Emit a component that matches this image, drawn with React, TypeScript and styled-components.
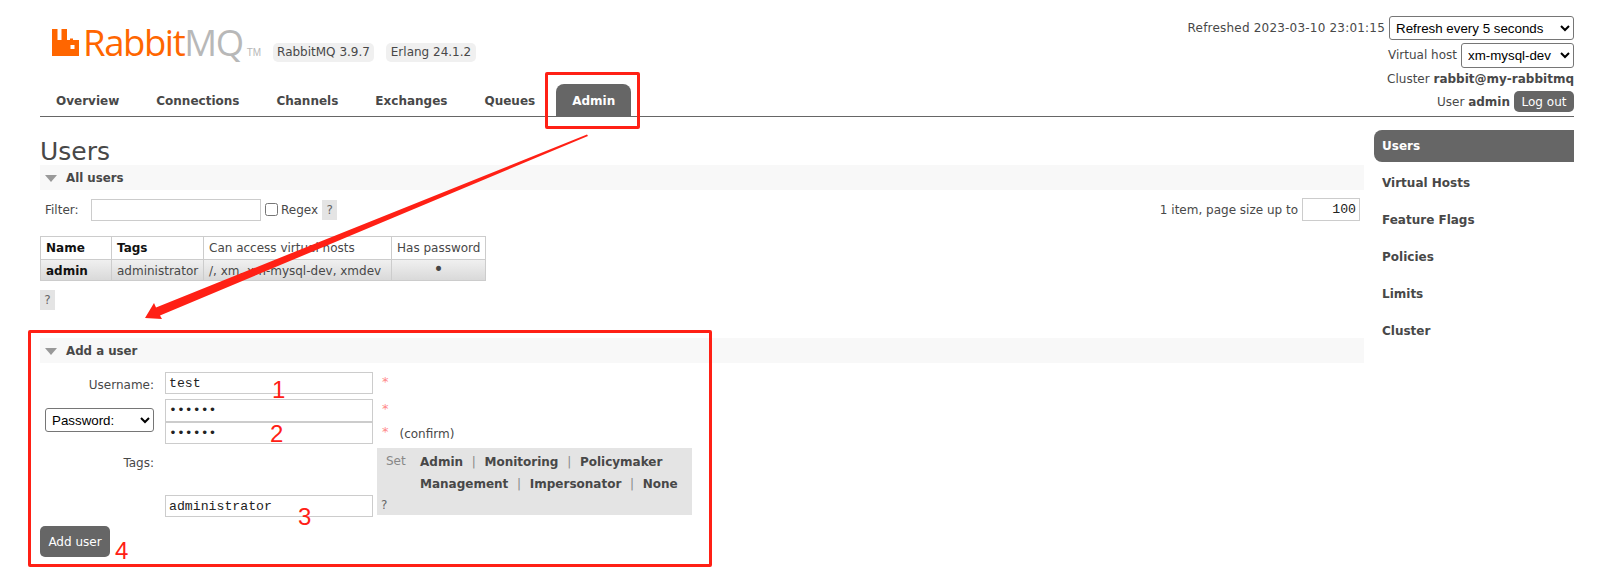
import React from "react";
import styled, { createGlobalStyle } from "styled-components";

const Global = createGlobalStyle`
  html, body { margin: 0; padding: 0; background: #fff; }
  body { font-family: "DejaVu Sans", Verdana, sans-serif; font-size: 12px; color: #484848; }
`;

const Page = styled.div`
  position: relative;
  width: 1614px;
  height: 572px;
  padding: 0 40px;
  box-sizing: border-box;
  overflow: hidden;
`;

const Header = styled.header`
  display: flex;
  justify-content: space-between;
  height: 116px;
  border-bottom: 1px solid #666;
  box-sizing: content-box;
`;

const Brand = styled.div`
  display: flex;
  flex-direction: column;
`;

const LogoRow = styled.div`
  display: flex;
  align-items: flex-start;
  height: 84px;
  padding: 29px 0 0 12px;
  box-sizing: border-box;
`;

const LogoWord = styled.div`
  display: flex;
  align-items: baseline;
  height: 27px;
  line-height: 27px;
  margin-left: 4px;
  font-family: "Open Sans", sans-serif;
  font-weight: 400;
  font-size: 36.5px;
  letter-spacing: -1.4px;
  width: 178px;
  white-space: nowrap;
`;

const Rabbit = styled.span`
  color: #ff6600;
`;

const MQ = styled.span`
  color: #b8b8b8;
`;

const TM = styled.span`
  color: #b8b8b8;
  font-family: "Liberation Sans", sans-serif;
  font-size: 10px;
  letter-spacing: 0;
  margin-left: 4px;
`;

const Badge = styled.span<{ $w: number; $ml: number }>`
  width: ${(p) => p.$w}px;
  margin: 14px 0 0 ${(p) => p.$ml}px;
  height: 19px;
  line-height: 19px;
  text-align: center;
  background: #f0f0f0;
  border-radius: 5px;
  font-size: 12px;
  white-space: nowrap;
`;

const Tabs = styled.nav`
  display: flex;
  height: 32px;
`;

const Tab = styled.a<{ $active?: boolean }>`
  display: block;
  height: 32px;
  line-height: 34px;
  padding: 0 16px;
  font-weight: bold;
  font-size: 12px;
  white-space: nowrap;
  border-radius: 8px 8px 0 0;
  color: ${(p) => (p.$active ? "#fff" : "#484848")};
  background: ${(p) => (p.$active ? "#666" : "transparent")};
  margin-right: ${(p) => (p.$active ? "0" : "5px")};
`;

const Status = styled.div`
  display: flex;
  flex-direction: column;
  align-items: flex-end;
  padding-top: 14px;
`;

const StatusRow = styled.div<{ $h: number }>`
  display: flex;
  align-items: center;
  gap: 4px;
  height: ${(p) => p.$h}px;
  white-space: nowrap;
`;

const Refreshed = styled.span`
  letter-spacing: 0.2px;
`;

const NativeSelect = styled.select<{ $w: number; $h: number }>`
  width: ${(p) => p.$w}px;
  height: ${(p) => p.$h}px;
  font-family: "Liberation Sans", Arial, sans-serif;
  font-size: 13.33px;
  color: #000;
  background: #fff;
  border: 1px solid #767676;
  border-radius: 3px;
  padding: 0 2px;
  margin: 0;
`;

const Logout = styled.button`
  width: 60px;
  height: 21px;
  padding: 0;
  border: 0;
  border-radius: 5px;
  background: #666;
  color: #fff;
  font-family: "DejaVu Sans", sans-serif;
  font-size: 12px;
`;

const Body = styled.div`
  display: flex;
  gap: 10px;
`;

const Content = styled.main`
  width: 1324px;
`;

const Title = styled.h1`
  margin: 0;
  height: 48px;
  padding-top: 20px;
  box-sizing: border-box;
  font-size: 25px;
  line-height: 30px;
  font-weight: normal;
  color: #484848;
`;

const SectionBar = styled.div`
  display: flex;
  align-items: center;
  height: 25px;
  background: #f8f8f8;
  padding-left: 6px;
  font-weight: bold;
  font-size: 11.8px;
`;

const Triangle = styled.span`
  width: 0;
  height: 0;
  border-left: 6px solid transparent;
  border-right: 6px solid transparent;
  border-top: 7px solid #999;
  margin-right: 7px;
  margin-left: -1px;
  margin-top: 1px;
`;

const SectionName = styled.span`
  margin-left: 2px;
`;

const FilterRow = styled.div`
  display: flex;
  align-items: center;
  height: 23px;
  margin-top: 8px;
  padding-left: 5px;
`;

const FilterLabel = styled.span`
  width: 46px;
`;

const TextInput = styled.input<{ $w: number; $h?: number; $right?: boolean }>`
  display: block;
  box-sizing: border-box;
  width: ${(p) => p.$w}px;
  height: ${(p) => p.$h ?? 22}px;
  margin: 0;
  padding: 0 3px;
  border: 1px solid #ccc;
  background: #fff;
  outline: none;
  font-family: "Liberation Mono", "Courier New", monospace;
  font-size: 13.2px;
  color: #222;
  text-align: ${(p) => (p.$right ? "right" : "left")};
`;

const Check = styled.input`
  width: 13px;
  height: 13px;
  margin: 0 3px 0 4px;
`;

const Help = styled.span<{ $mt?: number; $ml?: number }>`
  display: block;
  width: 15px;
  height: 20px;
  line-height: 20px;
  text-align: center;
  background: #e4e4e4;
  color: #666;
  font-size: 12px;
  margin-top: ${(p) => p.$mt ?? 0}px;
  margin-left: ${(p) => p.$ml ?? 0}px;
`;

const Spacer = styled.div`
  flex: 1;
`;

const Paging = styled.span`
  margin-right: 4px;
`;

const PagingEnd = styled.div`
  width: 4px;
`;

const Table = styled.table`
  border-collapse: collapse;
  margin-top: 15px;
  font-size: 12px;
  width: 445px;
  table-layout: fixed;
`;

const Th = styled.th<{ $w: number; $strong?: boolean }>`
  box-sizing: border-box;
  width: ${(p) => p.$w}px;
  height: 23px;
  padding: 0 5px;
  border: 1px solid #ccc;
  text-align: left;
  white-space: nowrap;
  font-weight: ${(p) => (p.$strong ? "bold" : "normal")};
  color: ${(p) => (p.$strong ? "#111" : "#484848")};
`;

const Tr = styled.tr`
  background: linear-gradient(#f0f0f0, #d8d8d8);
`;

const Td = styled.td<{ $strong?: boolean; $center?: boolean }>`
  height: 21px;
  padding: 1px 5px 0;
  box-sizing: border-box;
  border: 1px solid #ccc;
  white-space: nowrap;
  overflow: hidden;
  font-weight: ${(p) => (p.$strong ? "bold" : "normal")};
  color: ${(p) => (p.$strong ? "#111" : "#484848")};
  text-align: ${(p) => (p.$center ? "center" : "left")};
`;

const Dot = styled.span`
  font-size: 17px;
  line-height: 12px;
  color: #444;
`;

const AddSection = styled.div`
  margin-top: 28px;
`;

const FormGrid = styled.div`
  display: grid;
  grid-template-columns: 125px 212px 1fr;
  grid-template-rows: 27px 23px 26px 69px;
  margin-top: 9px;
`;

const FieldLabel = styled.label<{ $row: string; $top: number }>`
  grid-column: 1;
  grid-row: ${(p) => p.$row};
  padding: ${(p) => p.$top}px 11px 0 0;
  text-align: right;
`;

const SelectCell = styled.div`
  grid-column: 1;
  grid-row: 2 / 4;
  padding: 9px 0 0 5px;
`;

const InputCell = styled.div<{ $row: number; $end?: boolean }>`
  grid-column: 2;
  grid-row: ${(p) => p.$row};
  display: flex;
  align-items: ${(p) => (p.$end ? "flex-end" : "flex-start")};
`;

const NoteCell = styled.div<{ $row: number }>`
  grid-column: 3;
  grid-row: ${(p) => p.$row};
  display: flex;
  gap: 11px;
  padding-left: 5px;
  align-items: flex-start;
`;

const Star = styled.span`
  color: #f88;
  font-size: 13px;
  line-height: 19px;
`;

const Confirm = styled.span`
  line-height: 22px;
  padding-top: 1px;
`;

const TagPanel = styled.div`
  grid-column: 3;
  grid-row: 4;
  width: 315px;
  height: 67px;
  box-sizing: border-box;
  background: #e4e4e4;
  padding: 3px 0 0 9px;
  display: grid;
  grid-template-columns: 34px 1fr;
  grid-template-rows: 22px 22px 1fr;
`;

const SetLabel = styled.span`
  color: #888;
  line-height: 16px;
  margin-top: 2px;
`;

const TagLinks = styled.div`
  grid-column: 2;
  display: flex;
  align-items: center;
  font-weight: bold;
  white-space: nowrap;
`;

const Pipe = styled.span`
  font-weight: normal;
  color: #888;
  margin: 0 8.7px;
`;

const PanelHelp = styled.span`
  grid-column: 1;
  grid-row: 3;
  margin-left: -5px;
  padding-top: 3px;
  color: #666;
`;

const AddButton = styled.button`
  display: block;
  width: 70px;
  height: 31px;
  margin-top: 9px;
  padding: 0;
  border: 0;
  border-radius: 5px;
  background: #666;
  color: #fff;
  font-family: "DejaVu Sans", sans-serif;
  font-size: 12px;
`;

const SideNav = styled.nav`
  width: 200px;
  padding-top: 13px;
  display: flex;
  flex-direction: column;
  gap: 5px;
`;

const SideItem = styled.a<{ $active?: boolean }>`
  display: block;
  height: 32px;
  line-height: 32px;
  padding-left: 8px;
  font-weight: bold;
  border-radius: 8px 0 0 8px;
  color: ${(p) => (p.$active ? "#fff" : "#484848")};
  background: ${(p) => (p.$active ? "#666" : "transparent")};
`;

const RedFrame = styled.div<{ $x: number; $y: number; $w: number; $h: number }>`
  position: absolute;
  left: ${(p) => p.$x}px;
  top: ${(p) => p.$y}px;
  width: ${(p) => p.$w}px;
  height: ${(p) => p.$h}px;
  box-sizing: border-box;
  border: 3px solid #ff2015;
  border-radius: 2px;
  pointer-events: none;
`;

const Mark = styled.span<{ $x: number; $y: number }>`
  position: absolute;
  left: ${(p) => p.$x}px;
  top: ${(p) => p.$y}px;
  font-family: "Liberation Sans", sans-serif;
  font-size: 24px;
  line-height: 24px;
  color: #ff2015;
`;

const ArrowSvg = styled.svg`
  position: absolute;
  left: 0;
  top: 0;
  pointer-events: none;
`;

const tags: string[][] = [
  ["Admin", "Monitoring", "Policymaker"],
  ["Management", "Impersonator", "None"],
];

export default function App() {
  return (
    <Page>
      <Global />
      <Header>
        <Brand>
          <LogoRow>
            <svg width="27" height="27" viewBox="0 0 27 27" aria-hidden="true">
              <path
                fill="#ff6600"
                fillRule="evenodd"
                d="M0 0h5.5v11h4V0H15v11h3V9.5h3V11h6v16H0Z M18.5 16h4v4h-4Z"
              />
            </svg>
            <LogoWord>
              <Rabbit>Rabbit</Rabbit>
              <MQ>MQ</MQ>
              <TM>TM</TM>
            </LogoWord>
            <Badge $w={101} $ml={12}>RabbitMQ 3.9.7</Badge>
            <Badge $w={90} $ml={12}>Erlang 24.1.2</Badge>
          </LogoRow>
          <Tabs>
            <Tab>Overview</Tab>
            <Tab>Connections</Tab>
            <Tab>Channels</Tab>
            <Tab>Exchanges</Tab>
            <Tab>Queues</Tab>
            <Tab $active>Admin</Tab>
          </Tabs>
        </Brand>
        <Status>
          <StatusRow $h={28}>
            <Refreshed>Refreshed 2023-03-10 23:01:15</Refreshed>
            <NativeSelect $w={185} $h={24} defaultValue="5">
              <option value="5">Refresh every 5 seconds</option>
            </NativeSelect>
          </StatusRow>
          <StatusRow $h={26}>
            <span>Virtual host</span>
            <NativeSelect $w={113} $h={25} defaultValue="dev">
              <option value="dev">xm-mysql-dev</option>
            </NativeSelect>
          </StatusRow>
          <StatusRow $h={22}>
            <span>
              Cluster <b>rabbit@my-rabbitmq</b>
            </span>
          </StatusRow>
          <StatusRow $h={23}>
            <span>
              User <b>admin</b>
            </span>
            <Logout>Log out</Logout>
          </StatusRow>
        </Status>
      </Header>
      <Body>
        <Content>
          <Title>Users</Title>
          <SectionBar>
            <Triangle />
            <SectionName>All users</SectionName>
          </SectionBar>
          <FilterRow>
            <FilterLabel>Filter:</FilterLabel>
            <TextInput $w={170} readOnly />
            <Check type="checkbox" />
            <span>Regex</span>
            <Help $ml={4}>?</Help>
            <Spacer />
            <Paging>1 item, page size up to</Paging>
            <TextInput $w={58} $h={23} $right defaultValue="100" />
            <PagingEnd />
          </FilterRow>
          <Table>
            <thead>
              <tr>
                <Th $w={71} $strong>Name</Th>
                <Th $w={92} $strong>Tags</Th>
                <Th $w={188}>Can access virtual hosts</Th>
                <Th $w={94}>Has password</Th>
              </tr>
            </thead>
            <tbody>
              <Tr>
                <Td $strong>admin</Td>
                <Td>administrator</Td>
                <Td>/, xm, xm-mysql-dev, xmdev</Td>
                <Td $center><Dot>•</Dot></Td>
              </Tr>
            </tbody>
          </Table>
          <Help $mt={9}>?</Help>
          <AddSection>
            <SectionBar>
              <Triangle />
              <SectionName>Add a user</SectionName>
            </SectionBar>
            <FormGrid>
              <FieldLabel $row="1" $top={6}>Username:</FieldLabel>
              <InputCell $row={1}>
                <TextInput $w={208} defaultValue="test" />
              </InputCell>
              <NoteCell $row={1}>
                <Star>*</Star>
              </NoteCell>
              <SelectCell>
                <NativeSelect $w={109} $h={24} defaultValue="p">
                  <option value="p">Password:</option>
                </NativeSelect>
              </SelectCell>
              <InputCell $row={2}>
                <TextInput $w={208} $h={23} type="password" defaultValue="abcdef" />
              </InputCell>
              <NoteCell $row={2}>
                <Star>*</Star>
              </NoteCell>
              <InputCell $row={3}>
                <TextInput $w={208} type="password" defaultValue="abcdef" />
              </InputCell>
              <NoteCell $row={3}>
                <Star>*</Star>
                <Confirm>(confirm)</Confirm>
              </NoteCell>
              <FieldLabel $row="4" $top={8}>Tags:</FieldLabel>
              <InputCell $row={4} $end>
                <TextInput $w={208} defaultValue="administrator" />
              </InputCell>
              <TagPanel>
                <SetLabel>Set</SetLabel>
                {tags.map((group) => (
                  <TagLinks key={group[0]}>
                    {group.map((tag, i) => (
                      <React.Fragment key={tag}>
                        {i > 0 && <Pipe>|</Pipe>}
                        {tag}
                      </React.Fragment>
                    ))}
                  </TagLinks>
                ))}
                <PanelHelp>?</PanelHelp>
              </TagPanel>
            </FormGrid>
            <AddButton>Add user</AddButton>
          </AddSection>
        </Content>
        <SideNav>
          <SideItem $active>Users</SideItem>
          <SideItem>Virtual Hosts</SideItem>
          <SideItem>Feature Flags</SideItem>
          <SideItem>Policies</SideItem>
          <SideItem>Limits</SideItem>
          <SideItem>Cluster</SideItem>
        </SideNav>
      </Body>
      <RedFrame $x={545} $y={72} $w={95} $h={57} />
      <RedFrame $x={28} $y={330} $w={684} $h={237} />
      <ArrowSvg width="1614" height="572" aria-hidden="true">
        <polygon
          fill="#ff2015"
          points="587,134.5 588,136 160,315.5 162,319 145,318 154,303 156,307.5"
        />
      </ArrowSvg>
      <Mark $x={272} $y={378}>1</Mark>
      <Mark $x={270} $y={422}>2</Mark>
      <Mark $x={298} $y={505}>3</Mark>
      <Mark $x={115} $y={539}>4</Mark>
    </Page>
  );
}
